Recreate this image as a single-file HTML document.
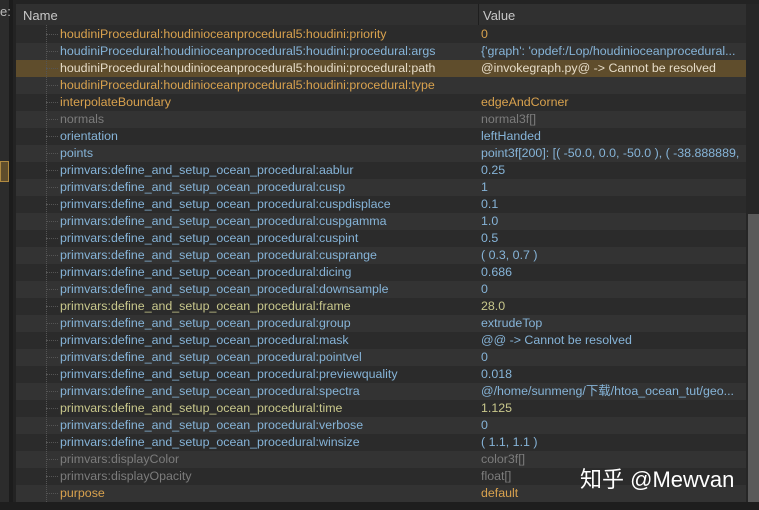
<!DOCTYPE html><html><head><meta charset="utf-8"><style>
body{margin:0;width:759px;height:510px;background:#232323;overflow:hidden;font-family:"Liberation Sans","Noto Sans CJK SC",sans-serif;font-size:12.4px;position:relative}
.left{position:absolute;left:0;top:0;width:9px;height:510px;background:#2c2c2c}
.sep{position:absolute;left:9px;top:0;width:4px;height:510px;background:#1c1c1c}
.tbl{position:absolute;left:16px;top:4px;width:730px;height:498px;background:#2b2b2b}
.hdr{position:absolute;left:16px;top:4px;width:730px;height:21px;background:#303030;color:#c8c8c8;font-size:13px}
.hdr span{position:absolute;top:4px}
.hdr .d{position:absolute;left:462px;top:0;width:1px;height:21px;background:#1e1e1e}
.row{position:absolute;left:16px;width:730px;height:17px;line-height:17px;white-space:nowrap}
.row:nth-child(even){background:#333333}
.row .n{position:absolute;left:44px}
.row .v{position:absolute;left:465px;width:262px;overflow:hidden}
.row .t{position:absolute;left:30px;top:8px;width:12px;border-top:1px dotted #555}
.o{color:#d9a24e}.b{color:#86b4d8}.g{color:#7c7c7c}.y{color:#c9c88c}.w{color:#e6dcc8}
.hl{background:#5f4d2c!important}
.vline{position:absolute;left:46px;top:25px;height:477px;border-left:1px dotted #555}
.sb{position:absolute;left:746px;top:4px;width:13px;height:498px;background:#262626}
.thumb{position:absolute;left:748px;top:214px;width:11px;height:288px;background:#5a5a5a}
.wm{position:absolute;left:580px;top:462px;color:#fff;font-size:22px}
.bot{position:absolute;left:0;top:502px;width:759px;height:8px;background:#1e1e1e}
.ybox{position:absolute;left:0;top:161px;width:7px;height:19px;border:1px solid #b08a40;background:#5f4d2c}
</style></head><body>
<div class="left"></div><div class="sep"></div><div class="ybox"></div>
<div style="position:absolute;left:0;top:4px;color:#bbb;font-size:13px">e:</div>
<div class="tbl">
</div>
<div class="hdr"><span style="left:7px">Name</span><div class="d"></div><span style="left:467px">Value</span></div>
<div id="rows" style="position:absolute;left:0;top:26px">
<div class="row" style="top:0px"><i class="t"></i><span class="n o">houdiniProcedural:houdinioceanprocedural5:houdini:priority</span><span class="v o">0</span></div>
<div class="row" style="top:17px"><i class="t"></i><span class="n b">houdiniProcedural:houdinioceanprocedural5:houdini:procedural:args</span><span class="v b">{'graph': 'opdef:/Lop/houdinioceanprocedural...</span></div>
<div class="row hl" style="top:34px"><i class="t"></i><span class="n w">houdiniProcedural:houdinioceanprocedural5:houdini:procedural:path</span><span class="v w">@invokegraph.py@ -&gt; Cannot be resolved</span></div>
<div class="row" style="top:51px"><i class="t"></i><span class="n o">houdiniProcedural:houdinioceanprocedural5:houdini:procedural:type</span><span class="v o"></span></div>
<div class="row" style="top:68px"><i class="t"></i><span class="n o">interpolateBoundary</span><span class="v o">edgeAndCorner</span></div>
<div class="row" style="top:85px"><i class="t"></i><span class="n g">normals</span><span class="v g">normal3f[]</span></div>
<div class="row" style="top:102px"><i class="t"></i><span class="n b">orientation</span><span class="v b">leftHanded</span></div>
<div class="row" style="top:119px"><i class="t"></i><span class="n b">points</span><span class="v b">point3f[200]: [( -50.0, 0.0, -50.0 ), ( -38.888889, ...</span></div>
<div class="row" style="top:136px"><i class="t"></i><span class="n b">primvars:define_and_setup_ocean_procedural:aablur</span><span class="v b">0.25</span></div>
<div class="row" style="top:153px"><i class="t"></i><span class="n b">primvars:define_and_setup_ocean_procedural:cusp</span><span class="v b">1</span></div>
<div class="row" style="top:170px"><i class="t"></i><span class="n b">primvars:define_and_setup_ocean_procedural:cuspdisplace</span><span class="v b">0.1</span></div>
<div class="row" style="top:187px"><i class="t"></i><span class="n b">primvars:define_and_setup_ocean_procedural:cuspgamma</span><span class="v b">1.0</span></div>
<div class="row" style="top:204px"><i class="t"></i><span class="n b">primvars:define_and_setup_ocean_procedural:cuspint</span><span class="v b">0.5</span></div>
<div class="row" style="top:221px"><i class="t"></i><span class="n b">primvars:define_and_setup_ocean_procedural:cusprange</span><span class="v b">( 0.3, 0.7 )</span></div>
<div class="row" style="top:238px"><i class="t"></i><span class="n b">primvars:define_and_setup_ocean_procedural:dicing</span><span class="v b">0.686</span></div>
<div class="row" style="top:255px"><i class="t"></i><span class="n b">primvars:define_and_setup_ocean_procedural:downsample</span><span class="v b">0</span></div>
<div class="row" style="top:272px"><i class="t"></i><span class="n y">primvars:define_and_setup_ocean_procedural:frame</span><span class="v y">28.0</span></div>
<div class="row" style="top:289px"><i class="t"></i><span class="n b">primvars:define_and_setup_ocean_procedural:group</span><span class="v b">extrudeTop</span></div>
<div class="row" style="top:306px"><i class="t"></i><span class="n b">primvars:define_and_setup_ocean_procedural:mask</span><span class="v b">@@ -&gt; Cannot be resolved</span></div>
<div class="row" style="top:323px"><i class="t"></i><span class="n b">primvars:define_and_setup_ocean_procedural:pointvel</span><span class="v b">0</span></div>
<div class="row" style="top:340px"><i class="t"></i><span class="n b">primvars:define_and_setup_ocean_procedural:previewquality</span><span class="v b">0.018</span></div>
<div class="row" style="top:357px"><i class="t"></i><span class="n b">primvars:define_and_setup_ocean_procedural:spectra</span><span class="v b">@/home/sunmeng/下载/htoa_ocean_tut/geo...</span></div>
<div class="row" style="top:374px"><i class="t"></i><span class="n y">primvars:define_and_setup_ocean_procedural:time</span><span class="v y">1.125</span></div>
<div class="row" style="top:391px"><i class="t"></i><span class="n b">primvars:define_and_setup_ocean_procedural:verbose</span><span class="v b">0</span></div>
<div class="row" style="top:408px"><i class="t"></i><span class="n b">primvars:define_and_setup_ocean_procedural:winsize</span><span class="v b">( 1.1, 1.1 )</span></div>
<div class="row" style="top:425px"><i class="t"></i><span class="n g">primvars:displayColor</span><span class="v g">color3f[]</span></div>
<div class="row" style="top:442px"><i class="t"></i><span class="n g">primvars:displayOpacity</span><span class="v g">float[]</span></div>
<div class="row" style="top:459px"><i class="t"></i><span class="n o">purpose</span><span class="v o">default</span></div>
</div>
<div class="vline"></div>
<div class="sb"></div><div class="thumb"></div>
<div class="bot"></div>
<div class="wm">知乎 @Mewvan</div>
</body></html>
